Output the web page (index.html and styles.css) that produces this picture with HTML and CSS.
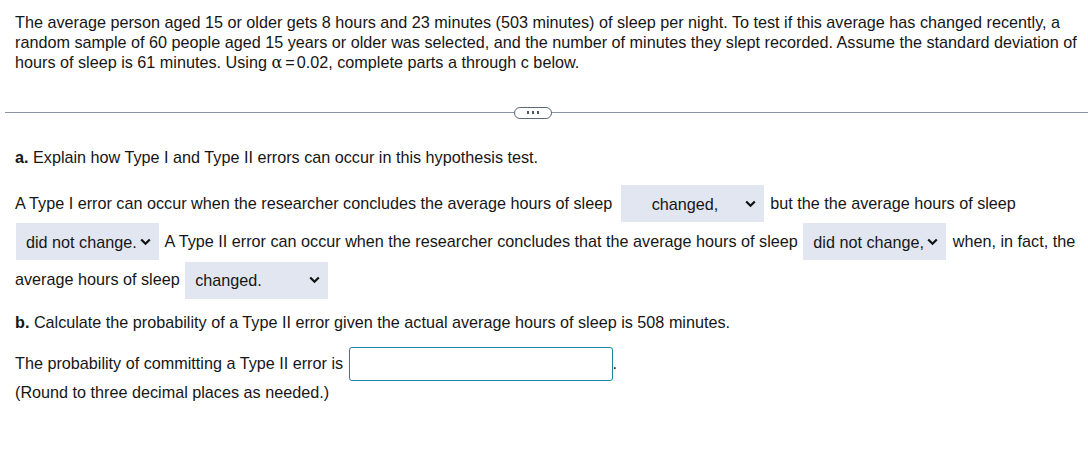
FILE: index.html
```html
<!DOCTYPE html>
<html>
<head>
<meta charset="utf-8">
<link rel="stylesheet" href="styles.css">
</head>
<body>
<div class="page">
  <p class="intro">The average person aged 15 or older gets 8 hours and 23 minutes (503 minutes) of sleep per night. To test if this average has changed recently, a random sample of 60 people aged 15 years or older was selected, and the number of minutes they slept recorded. Assume the standard deviation of hours of sleep is 61 minutes. Using <span class="alpha">α</span><span class="eq">=</span>0.02, complete parts a through c below.</p>

  <div class="divider">
    <span class="more"><span class="dot"></span><span class="dot"></span><span class="dot"></span></span>
  </div>

  <div class="content">
    <p class="part"><b>a.</b> Explain how Type I and Type II errors can occur in this hypothesis test.</p>

    <p class="answer">A Type I error can occur when the researcher concludes the average hours of sleep <span class="sel sel-center"><span class="sel-text">changed,</span><svg class="chev" viewBox="0 0 11 8" width="11" height="8"><path d="M1.2 1.5 L5.5 5.8 L9.8 1.5" fill="none" stroke="#111" stroke-width="2.2"/></svg></span> but the the average hours of sleep <span class="sel"><span class="sel-text">did not change.</span><svg class="chev" viewBox="0 0 11 8" width="11" height="8"><path d="M1.2 1.5 L5.5 5.8 L9.8 1.5" fill="none" stroke="#111" stroke-width="2.2"/></svg></span> A Type II error can occur when the researcher concludes that the average hours of sleep <span class="sel"><span class="sel-text">did not change,</span><svg class="chev" viewBox="0 0 11 8" width="11" height="8"><path d="M1.2 1.5 L5.5 5.8 L9.8 1.5" fill="none" stroke="#111" stroke-width="2.2"/></svg></span> when, in fact, the average hours of sleep <span class="sel"><span class="sel-text">changed.</span><svg class="chev" viewBox="0 0 11 8" width="11" height="8"><path d="M1.2 1.5 L5.5 5.8 L9.8 1.5" fill="none" stroke="#111" stroke-width="2.2"/></svg></span></p>

    <p class="part part-b"><b>b.</b> Calculate the probability of a Type II error given the actual average hours of sleep is 508 minutes.</p>

    <p class="prob">The probability of committing a Type II error is <span class="input"></span>.</p>
    <p class="note">(Round to three decimal places as needed.)</p>
  </div>
</div>
</body>
</html>
```

FILE: styles.css
```css
html, body {
  margin: 0;
  padding: 0;
  background: #fff;
}

body {
  font-family: "Liberation Sans", Arial, sans-serif;
  font-size: 16.2px;
  color: #161616;
}

.page {
  width: 1088px;
}

.intro {
  margin: 0;
  padding: 12px 0 0 15px;
  line-height: 20px;
  width: 1072px;
}

.alpha {
  font-family: "DejaVu Serif", serif;
  font-size: 16px;
  margin-right: 3px;
}

.eq {
  margin-right: 2px;
}

.divider {
  position: relative;
  margin: 33px 0 0 5px;
  height: 13px;
  display: flex;
  align-items: center;
  justify-content: center;
}

.divider::before {
  content: "";
  position: absolute;
  left: 0;
  right: 0;
  top: 6px;
  height: 1px;
  background: #8893a3;
}

.more {
  position: relative;
  display: flex;
  align-items: center;
  justify-content: center;
  gap: 3px;
  width: 38px;
  height: 12px;
  margin-right: 28px;
  border: 1px solid #5d6878;
  border-radius: 6px;
  background: #fff;
  box-sizing: border-box;
}

.dot {
  width: 2px;
  height: 3px;
  background: #4d5766;
}

.content {
  padding: 0 0 0 15px;
}

.part {
  margin: 28px 0 0 0;
  line-height: 20px;
}

.answer {
  margin: 18px 0 0 0;
  line-height: 37.5px;
  width: 1062px;
}

.sel {
  display: inline-flex;
  align-items: center;
  justify-content: space-between;
  vertical-align: middle;
  box-sizing: border-box;
  width: 143px;
  height: 37px;
  padding: 0 8px 0 10px;
  margin: 0 2px 0 1px;
  background: #e1e6f0;
  line-height: 20px;
  position: relative;
  top: -1px;
}

.sel-center {
  padding-left: 31px;
  margin-left: 4px;
}

.chev {
  flex: none;
}

.part-b {
  margin-top: 12px;
}

.prob {
  margin: 15px 0 0 0;
  line-height: 33px;
}

.input {
  display: inline-block;
  vertical-align: middle;
  box-sizing: border-box;
  width: 264px;
  height: 34px;
  border: 1px solid #1b83a3;
  border-radius: 3px;
  margin-left: 1px;
  position: relative;
  top: 0;
}

.note {
  margin: 0;
  line-height: 20px;
  margin-top: 1px;
}
```
